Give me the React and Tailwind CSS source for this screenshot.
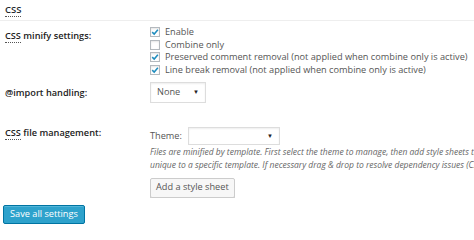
import React from "react";

const font = { fontFamily: '"Open Sans", "Noto Sans", sans-serif' };

function Check({ checked, label }) {
  return (
    <label className="flex items-center h-[12.5px] gap-[5px] whitespace-nowrap">
      <span className="w-[10px] h-[10px] shrink-0 border border-[#b4b9be] bg-white shadow-[inset_0_1px_2px_rgba(0,0,0,0.1)] flex items-center justify-center">
        {checked && (
          <svg width="8" height="8" viewBox="0 0 10 10">
            <path d="M1.5 5.2 L4 7.6 L8.6 2.2" fill="none" stroke="#1e8cbe" strokeWidth="1.9" />
          </svg>
        )}
      </span>
      <span>{label}</span>
    </label>
  );
}

function Select({ value, width, height }) {
  return (
    <div
      className="border border-[#ddd] bg-white flex items-center justify-between pl-[6px] pr-[6px] shadow-[inset_0_1px_2px_rgba(0,0,0,0.07)]"
      style={{ width, height }}
    >
      <span>{value}</span>
      <span className="text-[6px] text-[#222]">▼</span>
    </div>
  );
}

export default function App() {
  return (
    <div className="w-[474px] h-[228px] bg-white text-[#555] text-[9.2px] leading-[12.5px] overflow-hidden" style={font}>
      <div className="border-b border-[#eee] pl-[5px] pt-[4px] h-[21px]">
        <abbr className="no-underline border-b border-dotted border-[#555] font-semibold text-[#23282d] text-[9.5px]">CSS</abbr>
      </div>

      <div className="flex mt-[5px]">
        <div className="w-[145px] pl-[5px] pt-[4px] font-semibold text-[#222]">
          <abbr className="no-underline border-b border-dotted border-[#555]">CSS</abbr> minify settings:
        </div>
        <div className="pl-[5px]">
          <Check checked label="Enable" />
          <Check label="Combine only" />
          <Check checked label="Preserved comment removal (not applied when combine only is active)" />
          <Check checked label="Line break removal (not applied when combine only is active)" />
        </div>
      </div>

      <div className="flex items-center mt-[6px]">
        <div className="w-[145px] pl-[5px] pt-[2px] font-semibold text-[#222]">@import handling:</div>
        <div className="pl-[5px]">
          <Select value="None" width={56} height={21} />
        </div>
      </div>

      <div className="flex mt-[24px]">
        <div className="w-[145px] pl-[5px] font-semibold text-[#222]">
          <abbr className="no-underline border-b border-dotted border-[#555]">CSS</abbr> file management:
        </div>
        <div className="pl-[5px] flex-1 min-w-0 overflow-hidden">
          <div className="flex items-center gap-[6px]">
            <span>Theme:</span>
            <Select value="" width={92} height={18} />
          </div>
          <p className="italic text-[#666] text-[8.5px] leading-[13px] whitespace-nowrap">
            Files are minified by template. First select the theme to manage, then add style sheets that are
            <br />
            unique to a specific template. If necessary drag &amp; drop to resolve dependency issues (CSS order).
          </p>
          <button className="mt-[6.5px] h-[20px] px-[5px] border border-[#ccc] bg-[#f7f7f7] text-[#555] rounded-[2px] shadow-[0_1px_0_#ccc]">
            Add a style sheet
          </button>
        </div>
      </div>

      <div className="pl-[3px] mt-[7px]">
        <button className="h-[19px] px-[6px] bg-[#2ea2cc] border border-[#0074a2] text-white rounded-[2px] shadow-[inset_0_1px_0_rgba(120,200,230,0.5)]">
          Save all settings
        </button>
      </div>
    </div>
  );
}
